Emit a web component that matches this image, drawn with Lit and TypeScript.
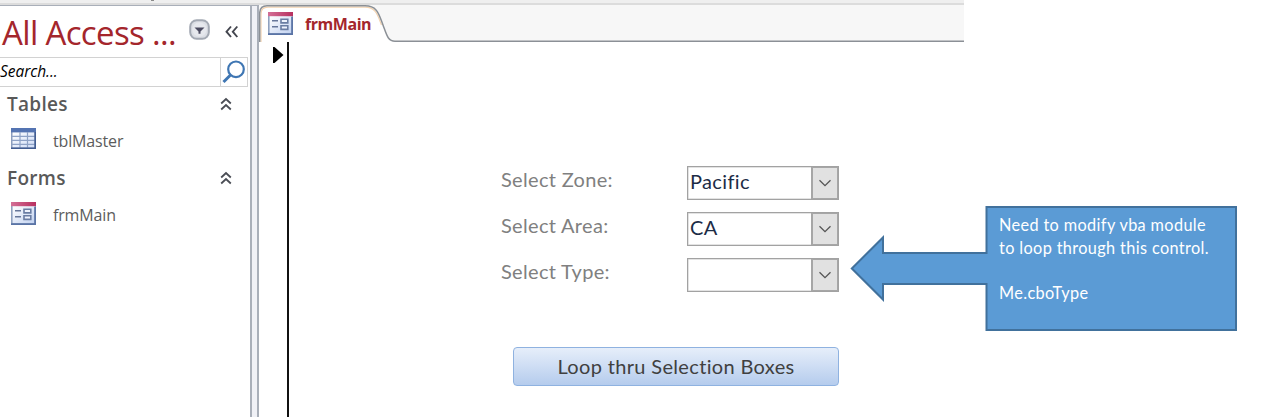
import { LitElement, html, css } from "lit";
import { customElement, property } from "lit/decorators.js";

const formGlyph = html`<svg width="25" height="23" viewBox="0 0 25 23">
  <defs><linearGradient id="f" x1="0" y1="0" x2="1" y2="1"><stop offset="0" stop-color="#fff"/><stop offset="1" stop-color="#c3d3f1"/></linearGradient>
  <linearGradient id="r" x1="0" x2="1"><stop offset="0" stop-color="#d36f96"/><stop offset="1" stop-color="#b8305f"/></linearGradient></defs>
  <rect x="0" y="0" width="25" height="23" fill="#8fa1bf"/>
  <rect x="1.6" y="4" width="21.9" height="17.2" fill="url(#f)"/>
  <rect x="0" y="0" width="25" height="4.2" fill="url(#r)"/>
  <path d="M0 22.1h25M24.1 5v18" stroke="#5a74a6" stroke-width="1.7"/>
  <path d="M4 8.8h6M4 14.8h6" stroke="#66779a" stroke-width="1.4"/>
  <path d="M13 7.3h6.8v3.6H13zM13 13.8h6.8v3.6H13z" fill="#eef3fd" stroke="#6a7da3" stroke-width="1.6"/>
</svg>`;

const tableGlyph = html`<svg width="25" height="21" viewBox="0 0 25 21">
  <defs><linearGradient id="t" x1="0" y1="0" x2="1" y2="1"><stop offset="0" stop-color="#fff"/><stop offset="1" stop-color="#cfdcf6"/></linearGradient></defs>
  <rect width="25" height="21" fill="#8b9dbd"/>
  <rect x="1.5" y="4" width="22" height="15.5" fill="url(#t)"/>
  <rect width="25" height="4.4" fill="#5474b2"/>
  <path d="M1 8.3h23M1 12.3h23M1 16.3h23M9 4v16M16.5 4v16" stroke="#8ea2c6" stroke-width="1.2"/>
  <path d="M0 20.2h25M24.2 4v17" stroke="#425d92" stroke-width="1.6"/>
</svg>`;

@customElement("nav-group")
class NavGroup extends LitElement {
  @property() heading = "";
  @property() item = "";
  @property() kind = "table";
  static styles = css`
    :host { display: block; height: 73.5px; font-family: "Open Sans", sans-serif; }
    .head { display: flex; align-items: center; height: 34px; padding: 0 18px 0 7px; justify-content: space-between; }
    .title { font: 600 19px/34px "Open Sans", sans-serif; color: #595959; white-space: nowrap; letter-spacing: 0.3px; }
    .row { display: flex; height: 39px; padding-left: 11px; }
    .icon { width: 42px; padding-top: 7px; }
    .icon svg { display: block; }
    .name { font-size: 16px; line-height: 39px; color: #5c5c5c; padding-top: 1px; letter-spacing: -0.15px; }
  `;
  render() {
    return html`<div class="head"><span class="title">${this.heading}</span>
      <svg width="12" height="14" viewBox="0 0 12 14"><path d="M1.2 6.5 6 2l4.8 4.5M1.2 12.5 6 8l4.8 4.5" fill="none" stroke="#4a4d55" stroke-width="1.8"/></svg></div>
      <div class="row"><span class="icon">${this.kind === "table" ? tableGlyph : formGlyph}</span><span class="name">${this.item}</span></div>`;
  }
}

@customElement("combo-field")
class ComboField extends LitElement {
  @property() label = "";
  @property() value = "";
  static styles = css`
    :host { display: flex; height: 34px; font-family: Lato, sans-serif; }
    .label { width: 186px; font-size: 20px; line-height: 26px; color: #808080; letter-spacing: 0.32px; white-space: nowrap; }
    .box { display: flex; box-sizing: border-box; width: 152px; height: 34px; border: 1px solid #a2a2a2; background: #fff; box-shadow: inset 0 0 0 0.5px #c8c8c8; }
    .value { flex: 1; padding-left: 2px; font-size: 20px; line-height: 29px; color: #1c2c46; letter-spacing: 0.35px; font-variant-ligatures: none; }
    .drop { box-sizing: border-box; width: 27px; height: 32px; border: 2px solid #a6a6a6; border-width: 1px 1px 1px 2px; background: #e1e1e1; display: flex; align-items: center; justify-content: center; }
  `;
  render() {
    return html`<span class="label">${this.label}</span>
      <div class="box"><span class="value">${this.value}</span><span class="drop">
      <svg width="14" height="9" viewBox="0 0 14 9"><path d="M1.5 1.2 7 6.7l5.5-5.5" fill="none" stroke="#555" stroke-width="1.3"/></svg></span></div>`;
  }
}

@customElement("app-root")
class AppRoot extends LitElement {
  static styles = css`
    :host { display: block; position: relative; width: 1266px; height: 417px; background: #fff; overflow: hidden; }
    .strip { box-sizing: border-box; width: 964px; height: 5px; background: #efefef; border-bottom: 2px solid #dcdcdc; padding-left: 151px; }
    .tick { width: 3px; height: 1px; background: #8a8a8a; }
    .main { display: flex; width: 964px; height: 412px; }
    .side { box-sizing: border-box; width: 250px; height: 412px; flex: none; border-top: 1px solid #a9afb9; }
    .gutter { box-sizing: border-box; width: 9px; flex: none; background: #f0f1f6; border: 2px solid #a9afb9; border-width: 1px 2px 0 2px; }
    .top { display: flex; height: 51px; padding-left: 2px; box-sizing: border-box; }
    .title { width: 187px; font: 400 33px/54px "Open Sans", sans-serif; color: #a4262c; white-space: nowrap; letter-spacing: -0.65px; }
    .filter { display: block; margin-top: 13px; }
    .shut { display: block; margin: 19px 0 0 15px; }
    .search { box-sizing: border-box; display: flex; width: 248px; height: 30px; border: 1px solid #d2d2d2; border-left: 0; }
    .query { flex: 1; font: italic 400 15.5px/27px "Open Sans", sans-serif; color: #000; letter-spacing: -0.05px; }
    .lens { width: 26px; border-left: 1px solid #d2d2d2; }
    .lens svg { display: block; }
    .work { flex: 1; display: flex; flex-direction: column; }
    .tabs { height: 37px; background: #f7f7f7; display: grid; }
    .tabs > * { grid-area: 1 / 1; }
    .tabtext { display: flex; align-items: flex-start; padding: 7px 0 0 9px; }
    .tabtext b { font: 700 16px/24px "Open Sans", sans-serif; color: #a4262c; margin-left: 12px; letter-spacing: -0.45px; }
    .form { flex: 1; display: flex; }
    .selector { box-sizing: border-box; width: 30px; border-right: 2px solid #111; padding: 5px 0 0 14px; }
    .fields { display: flex; flex-direction: column; gap: 12px; padding: 124px 0 0 212px; }
    .run { box-sizing: border-box; display: block; margin: 43px 0 0 12px; width: 326px; height: 39px; padding: 0 0 1px; border: 1.5px solid #8fb2e0; border-radius: 4px; background: linear-gradient(#e6eefa, #b5cced); font: 400 20px/34px Lato, sans-serif; color: #404040; letter-spacing: 0.34px; }
    .callout { position: absolute; left: 848px; top: 203px; width: 392px; height: 131px; }
    .callout svg { display: block; }
    .note { position: absolute; left: 151px; top: 11px; font: 400 16.3px/22.7px Lato, sans-serif; color: #fff; white-space: pre; letter-spacing: 0.36px; }
  `;
  render() {
    return html`
      <div class="strip"><div class="tick"></div></div>
      <div class="main">
        <div class="side">
          <div class="top"><span class="title">All Access ...</span>
            <svg class="filter" width="21" height="21" viewBox="0 0 21 21"><rect x="1.2" y="1.2" width="18.6" height="18.6" rx="6.5" fill="#dcdfe5" stroke="#a3a9b3" stroke-width="2"/><circle cx="10.5" cy="10.5" r="7.2" fill="#e6e8ed"/><path d="M5.5 8.5h10l-4 4v2.3h-2v-2.3z" fill="#4b4b60"/></svg>
            <svg class="shut" width="14" height="14" viewBox="0 0 14 14"><path d="M6 1.5 1.5 6.7 6 12M12.3 1.5 7.8 6.7l4.5 5.3" fill="none" stroke="#44464f" stroke-width="1.9"/></svg>
          </div>
          <div class="search"><span class="query">Search...</span><span class="lens"><svg width="25" height="28" viewBox="0 0 25 28"><circle cx="15" cy="11.3" r="7.8" fill="none" stroke="#3f76b3" stroke-width="2.2"/><path d="M9.5 17 2.5 24" stroke="#3f76b3" stroke-width="3"/></svg></span></div>
          <nav-group heading="Tables" item="tblMaster" kind="table"></nav-group>
          <nav-group heading="Forms" item="frmMain" kind="form"></nav-group>
        </div>
        <div class="gutter"></div>
        <div class="work">
          <div class="tabs">
            <svg width="705" height="37" viewBox="0 0 705 37">
              <path d="M0 37V8Q1 .8 8 .8H106C119 .8 120 10 124 20C128 31 129 36.2 136 36.2H705V37Z" fill="#fff"/>
              <path d="M2 37V9Q2 2.2 9 2.2H106C118 2.2 119 12 122.5 20" fill="none" stroke="#f3d3b0" stroke-width="1.2"/>
              <path d="M.7 37V8Q1 .8 8 .8H106C119 .8 120 10 124 20C128 31 129 36.2 136 36.2H705" fill="none" stroke="#8b9096" stroke-width="1.5"/>
            </svg>
            <div class="tabtext">${formGlyph}<b>frmMain</b></div>
          </div>
          <div class="form">
            <div class="selector"><svg width="11" height="17" viewBox="0 0 11 17"><path d="M0 0h1.5L10.5 8 1.5 16H0z" fill="#000"/></svg></div>
            <div class="fields">
              <combo-field label="Select Zone:" value="Pacific"></combo-field>
              <combo-field label="Select Area:" value="CA"></combo-field>
              <combo-field label="Select Type:"></combo-field>
              <button class="run">Loop thru Selection Boxes</button>
            </div>
          </div>
        </div>
      </div>
      <div class="callout">
        <svg width="392" height="131" viewBox="0 0 392 131"><path d="M138.5 4H388V127H138.5V81H35V96.5L3.8 65.5 35 34.5V50H138.5Z" fill="#5b9bd5" stroke="#41719c" stroke-width="2"/></svg>
        <div class="note">Need to modify vba module
to loop through this control.

Me.cboType</div>
      </div>`;
  }
}
